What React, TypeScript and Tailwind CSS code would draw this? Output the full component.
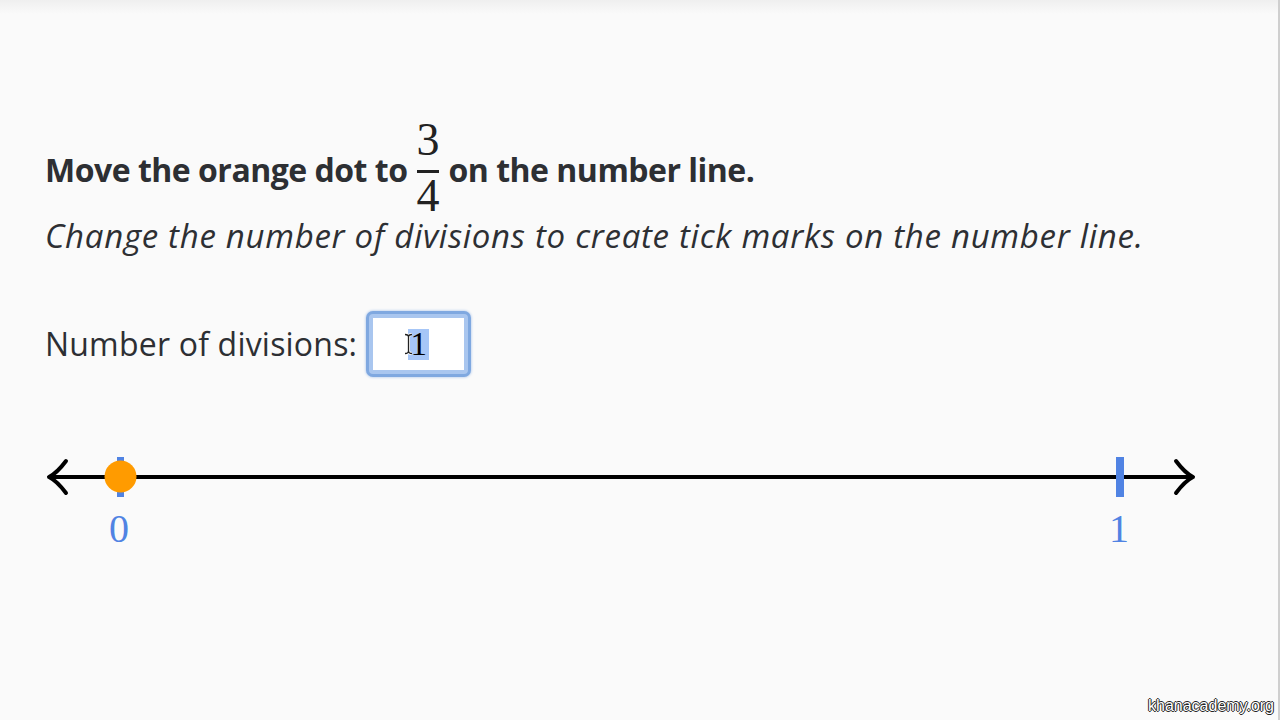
import React from 'react'

const BLUE = '#5083e3'
const ORANGE = '#ff9b00'

function NumberLine() {
  return (
    <svg width="1280" height="100" viewBox="0 0 1280 100" className="block">
      {/* main line */}
      <line x1="50" y1="27" x2="1193" y2="27" stroke="#000" strokeWidth="4" />
      {/* arrowheads */}
      <path d="M66 11 Q57 23 49 27 Q57 31 66 43" fill="none" stroke="#000" strokeWidth="4" strokeLinecap="round" strokeLinejoin="round" />
      <path d="M1176 11 Q1185 23 1193 27 Q1185 31 1176 43" fill="none" stroke="#000" strokeWidth="4" strokeLinecap="round" strokeLinejoin="round" />
      {/* ticks */}
      <rect x="117" y="7" width="7" height="40" fill={BLUE} />
      <rect x="1116" y="7" width="8" height="40" fill={BLUE} />
      {/* point */}
      <circle cx="120.5" cy="26.5" r="16" fill={ORANGE} />
    </svg>
  )
}

function IBeam() {
  return (
    <svg width="9" height="22" viewBox="0 0 9 22" className="absolute left-[31px] top-[15px]">
      <path d="M1 1.5 Q4.5 1.5 4.5 4 L4.5 18 Q4.5 20.5 1 20.5 M8 1.5 Q4.5 1.5 4.5 4 M4.5 18 Q4.5 20.5 8 20.5" fill="none" stroke="#fff" strokeWidth="3" />
      <path d="M1 1.5 Q4.5 1.5 4.5 4 L4.5 18 Q4.5 20.5 1 20.5 M8 1.5 Q4.5 1.5 4.5 4 M4.5 18 Q4.5 20.5 8 20.5" fill="none" stroke="#222" strokeWidth="1.3" />
    </svg>
  )
}

export default function App() {
  return (
    <div className="relative flex h-[720px] w-[1280px] flex-col overflow-hidden border-r-2 border-[#cfcfcf] bg-[#fafafa] font-['Open_Sans','Liberation_Sans',sans-serif] text-[#2d2f33]">
      <div className="h-[14px] w-full bg-gradient-to-b from-[#efefef] to-[#fafafa]" />

      <div className="flex flex-col pl-[45px]">
        <div className="mt-[110px] flex h-[91px] items-center">
          <span className="text-[32px] font-bold tracking-[-0.5px]">Move the orange dot to</span>
          <span className="mx-[9px] mt-[-3px] inline-flex flex-col items-center font-['Liberation_Serif','DejaVu_Serif',serif] text-[46px] leading-[32px] text-[#222]">
            <span>3</span>
            <span className="mt-[14px] mb-[7px] h-[3px] w-[22px] bg-[#222]" />
            <span>4</span>
          </span>
          <span className="text-[32px] font-bold tracking-[-0.5px]">on the number line.</span>
        </div>

        <p className="mt-[1px] text-[33px] italic leading-[40px] tracking-[0.7px]">
          Change the number of divisions to create tick marks on the number line.
        </p>

        <div className="mt-[55px] flex items-center">
          <span className="text-[32px] leading-[40px] tracking-[0.2px]">Number of divisions:</span>
          <div className="ml-[9px] rounded-[7px] border-[3px] border-[#7fa8e0] bg-[#a9c6ef] p-[4px] shadow-[0_0_3px_#9bbbe8]">
            <div className="relative flex h-[52px] w-[91px] items-center justify-center bg-white">
              <span className="bg-[#a6c6f7] px-[2px] font-['Liberation_Serif','DejaVu_Serif',serif] text-[33px] leading-[31px] text-black">1</span>
              <IBeam />
            </div>
          </div>
        </div>
      </div>

      <div className="mt-[73px]">
        <NumberLine />
      </div>

      <div className="relative h-[50px] font-['Liberation_Serif','DejaVu_Serif',serif] text-[40px] leading-[50px]" style={{ color: BLUE }}>
        <span className="absolute left-[109px] top-[-46px]">0</span>
        <span className="absolute left-[1109px] top-[-46px]">1</span>
      </div>

      <div className="absolute bottom-[2px] right-[4px] font-['Liberation_Sans',sans-serif] text-[16px] text-white [text-shadow:-1px_0_#222,1px_0_#222,0_-1px_#222,0_1px_#222]">
        khanacademy.org
      </div>
    </div>
  )
}
